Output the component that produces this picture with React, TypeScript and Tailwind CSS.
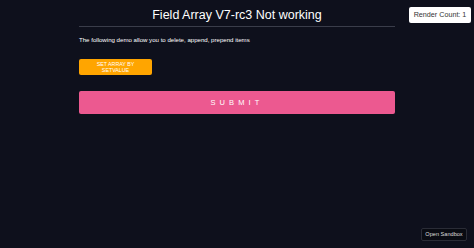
export default function App() {
  return (
    <div
      className="relative h-[248px] w-[474px] overflow-hidden bg-[#0e101c] text-white"
      style={{ fontFamily: '"Liberation Sans", Arial, sans-serif' }}
    >
      <div className="mx-auto flex w-[316px] flex-col pt-[8px]">
        <h1 className="text-center text-[12.5px] leading-[15px] text-white">Field Array V7-rc3 Not working</h1>
        <div className="mt-[3px] border-b border-[#3a3d4a]" />
        <p className="mt-[9px] text-[6.1px] leading-[8px] text-white">
          The following demo allow you to delete, append, prepend items
        </p>
        <button className="mt-[15px] flex h-[16px] w-[73px] flex-col items-center justify-center rounded-[2px] bg-[#ffa500] text-[5.3px] leading-[6px] uppercase text-white">
          <span>Set array by</span>
          <span>setValue</span>
        </button>
        <button className="mt-[16px] h-[23px] w-full rounded-[2px] bg-[#ec5990] text-[7.5px] uppercase tracking-[0.55em] text-white">
          Submit
        </button>
      </div>
      <div className="absolute right-[3px] top-[7px] flex h-[16px] w-[62px] items-center justify-center rounded-[2px] bg-white text-[7.2px] text-[#333]">
        Render Count: 1
      </div>
      <div className="absolute bottom-[7px] right-[7px] flex h-[13px] w-[46px] items-center justify-center rounded-[2px] border border-[#2a2c36] bg-[#090b12] text-[5.6px] text-[#ddd]">
        Open Sandbox
      </div>
    </div>
  );
}
